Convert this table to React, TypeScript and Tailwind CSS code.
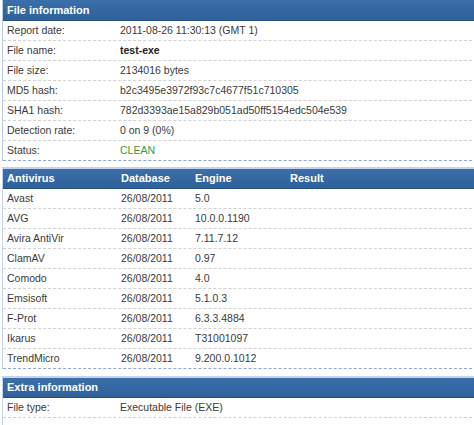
const fileInfo: { label: string; value: string; kind?: 'bold' | 'clean' }[] = [
  { label: 'Report date:', value: '2011-08-26 11:30:13 (GMT 1)' },
  { label: 'File name:', value: 'test-exe', kind: 'bold' },
  { label: 'File size:', value: '2134016 bytes' },
  { label: 'MD5 hash:', value: 'b2c3495e3972f93c7c4677f51c710305' },
  { label: 'SHA1 hash:', value: '782d3393ae15a829b051ad50ff5154edc504e539' },
  { label: 'Detection rate:', value: '0 on 9 (0%)' },
  { label: 'Status:', value: 'CLEAN', kind: 'clean' },
];

const scans = [
  ['Avast', '26/08/2011', '5.0'],
  ['AVG', '26/08/2011', '10.0.0.1190'],
  ['Avira AntiVir', '26/08/2011', '7.11.7.12'],
  ['ClamAV', '26/08/2011', '0.97'],
  ['Comodo', '26/08/2011', '4.0'],
  ['Emsisoft', '26/08/2011', '5.1.0.3'],
  ['F-Prot', '26/08/2011', '6.3.3.4884'],
  ['Ikarus', '26/08/2011', 'T31001097'],
  ['TrendMicro', '26/08/2011', '9.200.0.1012'],
];

function Header({ children, tall }: { children: React.ReactNode; tall?: boolean }) {
  return (
    <div
      className={`${
        tall ? 'h-[21px]' : 'h-[20px]'
      } flex items-center px-[4px] bg-gradient-to-b from-[#3b6fab] to-[#2f6199] border-b border-[#214f82] text-white font-bold text-[11px]`}
    >
      {children}
    </div>
  );
}

function Row({ children, last }: { children: React.ReactNode; last?: boolean }) {
  return (
    <div
      className={`h-[20px] flex items-center px-[4px] border-b border-dashed ${
        last ? 'border-[#8eaad3]' : 'border-[#d2d2d2]'
      }`}
    >
      {children}
    </div>
  );
}

export default function App() {
  return (
    <div className="w-[474px] h-[425px] overflow-hidden bg-white pl-[2px] font-['Liberation_Sans',Arial,sans-serif] text-[10.5px] text-[#3a3a3a]">
      <div className="w-[480px]">
        {/* File information */}
        <section className="border-l border-[#b9cbe4]">
          <Header tall>File information</Header>
          {fileInfo.map((r, i) => (
            <Row key={r.label} last={i === fileInfo.length - 1}>
              <span className="w-[113px] shrink-0">{r.label}</span>
              <span
                className={
                  r.kind === 'bold'
                    ? 'font-bold text-[#222]'
                    : r.kind === 'clean'
                    ? 'text-[#3a9a3a]'
                    : ''
                }
              >
                {r.value}
              </span>
            </Row>
          ))}
        </section>

        {/* Antivirus table */}
        <section className="mt-[6px] border-l border-t-2 border-[#c3d4ea]">
          <Header>
            <span className="w-[114px] shrink-0">Antivirus</span>
            <span className="w-[74px] shrink-0">Database</span>
            <span className="w-[95px] shrink-0">Engine</span>
            <span>Result</span>
          </Header>
          {scans.map((s, i) => (
            <Row key={s[0]} last={i === scans.length - 1}>
              <span className="w-[114px] shrink-0">{s[0]}</span>
              <span className="w-[74px] shrink-0">{s[1]}</span>
              <span className="w-[95px] shrink-0">{s[2]}</span>
              <span></span>
            </Row>
          ))}
        </section>

        {/* Extra information */}
        <section className="mt-[7px] border-l border-t-2 border-[#c3d4ea]">
          <Header>Extra information</Header>
          <Row>
            <span className="w-[113px] shrink-0">File type:</span>
            <span>Executable File (EXE)</span>
          </Row>
          <Row>
            <span></span>
          </Row>
        </section>
      </div>
    </div>
  );
}
